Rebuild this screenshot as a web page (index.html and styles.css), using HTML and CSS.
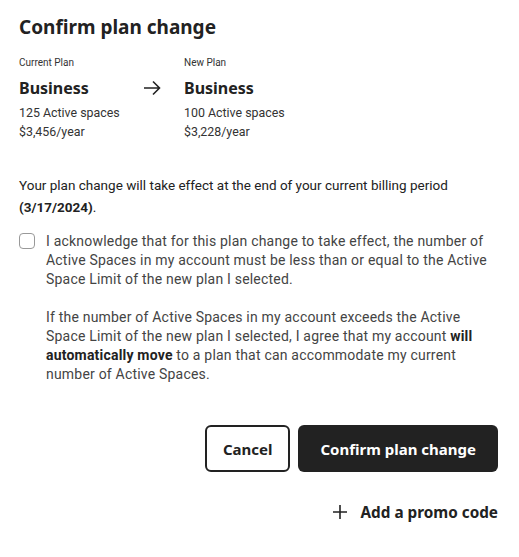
FILE: index.html
```html
<!DOCTYPE html>
<html lang="en">
<head>
    <meta charset="UTF-8">
    <title>Confirm plan change</title>
    <link rel="stylesheet" href="styles.css">
</head>
<body>
    <div class="dialog">
        <h1 class="title">Confirm plan change</h1>

        <!-- plan comparison -->
        <div class="plans">
            <div class="plan">
                <div class="plan-label">Current Plan</div>
                <div class="plan-name">Business</div>
                <div class="plan-detail">125 Active spaces</div>
                <div class="plan-detail">$3,456/year</div>
            </div>
            <div class="plan-arrow">
                <svg width="18" height="16" viewBox="0 0 18 16" fill="none" stroke="#222" stroke-width="1.6">
                    <path d="M1 8h15.5M10 1.5L16.5 8 10 14.5"/>
                </svg>
            </div>
            <div class="plan">
                <div class="plan-label">New Plan</div>
                <div class="plan-name">Business</div>
                <div class="plan-detail">100 Active spaces</div>
                <div class="plan-detail">$3,228/year</div>
            </div>
        </div>

        <p class="notice">Your plan change will take effect at the end of your current billing period <strong>(3/17/2024)</strong>.</p>

        <label class="ack">
            <span class="checkbox"></span>
            <span class="ack-text">
                <span class="ack-para">I acknowledge that for this plan change to take effect, the number of Active Spaces in my account must be less than or equal to the Active Space Limit of the new plan I selected.</span>
                <span class="ack-para">If the number of Active Spaces in my account exceeds the Active Space Limit of the new plan I selected, I agree that my account <strong>will automatically move</strong> to a plan that can accommodate my current number of Active Spaces.</span>
            </span>
        </label>

        <div class="actions">
            <button class="btn btn-outline">Cancel</button>
            <button class="btn btn-dark">Confirm plan change</button>
        </div>

        <div class="promo">
            <svg width="14" height="14" viewBox="0 0 14 14" stroke="#222" stroke-width="1.6">
                <path d="M7 0v14M0 7h14"/>
            </svg>
            <span>Add a promo code</span>
        </div>
    </div>
</body>
</html>
```

FILE: styles.css
```css
body {
    margin: 0;
    background: #fff;
    color: #222;
    font-family: Roboto, "Liberation Sans", sans-serif;
}
.dialog {
    width: 479px;
    padding: 14px 21px 0 19px;
}
.title {
    font-family: "Noto Sans", sans-serif;
    font-size: 19px;
    font-weight: 700;
    margin: 0 0 17px;
    line-height: 26px;
}
.plans {
    display: flex;
    align-items: flex-start;
}
.plan {
    width: 124px;
}
.plan-label {
    font-size: 10px;
    color: #333;
    line-height: 12px;
}
.plan-name {
    font-family: "Noto Sans", sans-serif;
    font-size: 16px;
    font-weight: 700;
    line-height: 20px;
    margin: 9px 0 5px;
}
.plan-detail {
    font-size: 12.4px;
    color: #333;
    line-height: 19px;
}
.plan-arrow {
    width: 41px;
    padding-top: 23px;
}
.notice {
    font-size: 13.5px;
    line-height: 22px;
    margin: 33px 0 14px;
}
.ack {
    display: flex;
    gap: 11px;
}
.checkbox {
    flex: none;
    width: 14px;
    height: 14px;
    border: 1.5px solid #999;
    border-radius: 4px;
    margin-top: 1px;
}
.ack-text {
    max-width: 442px;
    font-size: 14px;
    letter-spacing: 0.2px;
    line-height: 19px;
    color: #444;
}
.ack-para {
    display: block;
    margin-bottom: 19px;
}
.ack-para strong {
    color: #222;
}
.actions {
    display: flex;
    justify-content: flex-end;
    gap: 8px;
    margin-top: 22px;
}
.btn {
    font-family: "Noto Sans", sans-serif;
    font-size: 15px;
    font-weight: 700;
    height: 47px;
    border-radius: 6px;
    cursor: pointer;
}
.btn-outline {
    background: #fff;
    color: #222;
    border: 2px solid #222;
    padding: 0 16px;
}
.btn-dark {
    background: #222;
    color: #fff;
    border: none;
    padding: 0 22px;
}
.promo {
    display: flex;
    justify-content: flex-end;
    align-items: center;
    gap: 13px;
    margin-top: 30px;
    font-family: "Noto Sans", sans-serif;
    font-size: 15.3px;
    font-weight: 700;
}
```
